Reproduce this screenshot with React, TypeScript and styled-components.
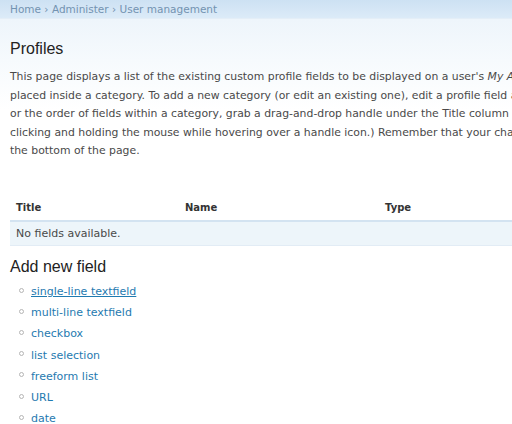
import React from "react";
import styled, { createGlobalStyle } from "styled-components";

const GlobalStyle = createGlobalStyle`
  html, body {
    margin: 0;
    padding: 0;
    background: #ffffff;
    overflow: hidden;
  }
  body {
    font-family: "DejaVu Sans", Verdana, sans-serif;
    font-size: 11px;
    color: #494949;
  }
`;

const Page = styled.div`
  width: 900px;
  min-height: 424px;
  background: linear-gradient(#eef5fb 20px, #f6fafd 60px, #ffffff 110px);
`;

const Breadcrumb = styled.div`
  height: 19px;
  padding: 2px 0 0 10px;
  box-sizing: border-box;
  background: linear-gradient(#cde1f3, #dcebf8);
  border-bottom: 1px solid #e4eef7;
  color: #7393b1;
  font-size: 10.5px;
  line-height: 14px;
`;

const Content = styled.div`
  padding: 0 0 0 10px;
`;

const Heading = styled.h2<{ $top: number }>`
  margin: 0;
  font-family: "Liberation Sans", Arial, sans-serif;
  font-weight: normal;
  font-size: 16px;
  color: #222222;
  line-height: 20px;
  padding-top: ${(p) => p.$top}px;
`;

const Help = styled.p`
  margin: 9px 0 0;
  white-space: nowrap;
  font-size: 10.85px;
  line-height: 18.6px;
`;

const Table = styled.table`
  margin-top: 36px;
  width: 890px;
  border-collapse: collapse;
`;

const Th = styled.th<{ $w?: number }>`
  text-align: left;
  font-size: 10px;
  font-weight: bold;
  color: #333333;
  padding: 3px 6px 4px;
  height: 16px;
  width: ${(p) => (p.$w ? `${p.$w}px` : "auto")};
  border-bottom: 2px solid #d3e3f1;
`;

const Td = styled.td`
  background: #edf5fa;
  padding: 4px 6px;
  height: 15px;
  border-bottom: 1px solid #e2ecf5;
`;

const FieldList = styled.ul`
  list-style: none;
  margin: 4px 0 0;
  padding: 0 0 0 9px;
`;

const FieldItem = styled.li`
  display: flex;
  align-items: center;
  height: 21.2px;
`;

const Bullet = styled.span`
  width: 3px;
  height: 3px;
  border: 1px solid #b5b5b5;
  border-radius: 50%;
  margin-right: 7px;
  margin-bottom: 3px;
`;

const FieldLink = styled.a<{ $hover?: boolean }>`
  color: #1f7ab0;
  text-decoration: ${(p) => (p.$hover ? "underline" : "none")};
  cursor: pointer;
`;

const fields = [
  "single-line textfield",
  "multi-line textfield",
  "checkbox",
  "list selection",
  "freeform list",
  "URL",
  "date",
];

const App = () => {
  return (
    <Page>
      <GlobalStyle />
      <Breadcrumb>Home › Administer › User management</Breadcrumb>
      <Content>
        <Heading $top={20}>Profiles</Heading>
        <Help>
          This page displays a list of the existing custom profile fields to be
          displayed on a user's <em>My Account</em> page. To provide structure,
          similar or related fields may be
          <br />
          placed inside a category. To add a new category (or edit an existing
          one), edit a profile field and provide a new category name. To change
          the category of a field
          <br />
          or the order of fields within a category, grab a drag-and-drop handle
          under the Title column and drag the field to a new location in the
          list. (Grab a handle by
          <br />
          clicking and holding the mouse while hovering over a handle icon.)
          Remember that your changes will not be saved until you click the{" "}
          <em>Save configuration</em> button at
          <br />
          the bottom of the page.
        </Help>
        <Table>
          <thead>
            <tr>
              <Th $w={157}>Title</Th>
              <Th $w={188}>Name</Th>
              <Th>Type</Th>
            </tr>
          </thead>
          <tbody>
            <tr>
              <Td colSpan={3}>No fields available.</Td>
            </tr>
          </tbody>
        </Table>
        <Heading $top={11}>Add new field</Heading>
        <FieldList>
          {fields.map((f, i) => (
            <FieldItem key={f}>
              <Bullet />
              <FieldLink $hover={i === 0}>{f}</FieldLink>
            </FieldItem>
          ))}
        </FieldList>
      </Content>
    </Page>
  );
};

export default App;
